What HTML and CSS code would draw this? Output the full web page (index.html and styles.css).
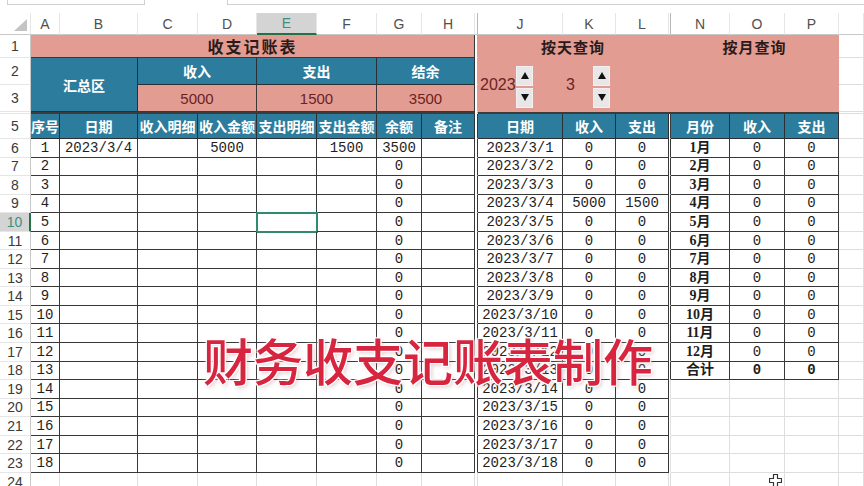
FILE: index.html
```html
<!DOCTYPE html>
<html lang="zh-CN">
<head>
<meta charset="utf-8">
<title>财务收支记账表</title>
<link rel="stylesheet" href="styles.css">
</head>
<body>
<div class="topbar"><div class="namebox"></div><div class="fx"></div><div class="formula"></div></div>
<div class="sheet">
<div class="ch corner"><svg width="13" height="12" viewBox="0 0 13 12"><path d="M13 0 L13 12 L0 12 Z" fill="#c4c4c4"/></svg></div><div class="ch">A</div><div class="ch">B</div><div class="ch">C</div><div class="ch">D</div><div class="ch on">E</div><div class="ch">F</div><div class="ch">G</div><div class="ch">H</div><div class="ch ci"></div><div class="ch">J</div><div class="ch">K</div><div class="ch">L</div><div class="ch ci"></div><div class="ch">N</div><div class="ch">O</div><div class="ch">P</div><div class="ch"></div>

<div class="rh">1</div><div class="p d title s8">收支记账表</div><div class="ig top"></div><div class="pk qh s3">按天查询</div><div class="pk"></div><div class="pk qh s3">按月查询</div><div></div>

<div class="rh">2</div><div class="t s2 r2">汇总区</div><div class="t s2">收入</div><div class="t s2">支出</div><div class="t s2">结余</div><div class="ig top"></div><div class="pk s3 r2 qd"><span class="yr">2023</span><span class="spin"><span class="sb"><svg width="8" height="7" viewBox="0 0 8 7"><path d="M4 0 L8 7 L0 7 Z"/></svg></span><span class="sb"><svg width="8" height="7" viewBox="0 0 8 7"><path d="M0 0 L8 0 L4 7 Z"/></svg></span></span><span class="mn">3</span><span class="spin"><span class="sb"><svg width="8" height="7" viewBox="0 0 8 7"><path d="M4 0 L8 7 L0 7 Z"/></svg></span><span class="sb"><svg width="8" height="7" viewBox="0 0 8 7"><path d="M0 0 L8 0 L4 7 Z"/></svg></span></span></div><div class="pk r2"></div><div class="pk s3 r2"></div><div></div>

<div class="rh">3</div><div class="p d s2 num">5000</div><div class="p d s2 num">1500</div><div class="p d s2 num">3500</div><div class="ig top"></div><div></div>

<div class="rh"></div><div class="gap s8"></div><div class="ig top"></div><div class="gap s3"></div><div class="gap"></div><div class="gap s3"></div><div></div>

<div class="rh">5</div><div class="t">序号</div><div class="t">日期</div><div class="t">收入明细</div><div class="t">收入金额</div><div class="t">支出明细</div><div class="t">支出金额</div><div class="t">余额</div><div class="t">备注</div><div class="ig"></div><div class="t">日期</div><div class="t">收入</div><div class="t">支出</div><div class="ig"></div><div class="t">月份</div><div class="t">收入</div><div class="t">支出</div><div></div>

<div class="rh">6</div><div class="d">1</div><div class="d">2023/3/4</div><div class="d"></div><div class="d">5000</div><div class="d"></div><div class="d">1500</div><div class="d">3500</div><div class="d"></div><div class="ig"></div><div class="d">2023/3/1</div><div class="d">0</div><div class="d">0</div><div class="ig"></div><div class="d mo">1月</div><div class="d">0</div><div class="d">0</div><div></div>
<div class="rh">7</div><div class="d">2</div><div class="d"></div><div class="d"></div><div class="d"></div><div class="d"></div><div class="d"></div><div class="d">0</div><div class="d"></div><div class="ig"></div><div class="d">2023/3/2</div><div class="d">0</div><div class="d">0</div><div class="ig"></div><div class="d mo">2月</div><div class="d">0</div><div class="d">0</div><div></div>
<div class="rh">8</div><div class="d">3</div><div class="d"></div><div class="d"></div><div class="d"></div><div class="d"></div><div class="d"></div><div class="d">0</div><div class="d"></div><div class="ig"></div><div class="d">2023/3/3</div><div class="d">0</div><div class="d">0</div><div class="ig"></div><div class="d mo">3月</div><div class="d">0</div><div class="d">0</div><div></div>
<div class="rh">9</div><div class="d">4</div><div class="d"></div><div class="d"></div><div class="d"></div><div class="d"></div><div class="d"></div><div class="d">0</div><div class="d"></div><div class="ig"></div><div class="d">2023/3/4</div><div class="d">5000</div><div class="d">1500</div><div class="ig"></div><div class="d mo">4月</div><div class="d">0</div><div class="d">0</div><div></div>
<div class="rh on">10</div><div class="d">5</div><div class="d"></div><div class="d"></div><div class="d"></div><div class="d sel"></div><div class="d"></div><div class="d">0</div><div class="d"></div><div class="ig"></div><div class="d">2023/3/5</div><div class="d">0</div><div class="d">0</div><div class="ig"></div><div class="d mo">5月</div><div class="d">0</div><div class="d">0</div><div></div>
<div class="rh">11</div><div class="d">6</div><div class="d"></div><div class="d"></div><div class="d"></div><div class="d"></div><div class="d"></div><div class="d">0</div><div class="d"></div><div class="ig"></div><div class="d">2023/3/6</div><div class="d">0</div><div class="d">0</div><div class="ig"></div><div class="d mo">6月</div><div class="d">0</div><div class="d">0</div><div></div>
<div class="rh">12</div><div class="d">7</div><div class="d"></div><div class="d"></div><div class="d"></div><div class="d"></div><div class="d"></div><div class="d">0</div><div class="d"></div><div class="ig"></div><div class="d">2023/3/7</div><div class="d">0</div><div class="d">0</div><div class="ig"></div><div class="d mo">7月</div><div class="d">0</div><div class="d">0</div><div></div>
<div class="rh">13</div><div class="d">8</div><div class="d"></div><div class="d"></div><div class="d"></div><div class="d"></div><div class="d"></div><div class="d">0</div><div class="d"></div><div class="ig"></div><div class="d">2023/3/8</div><div class="d">0</div><div class="d">0</div><div class="ig"></div><div class="d mo">8月</div><div class="d">0</div><div class="d">0</div><div></div>
<div class="rh">14</div><div class="d">9</div><div class="d"></div><div class="d"></div><div class="d"></div><div class="d"></div><div class="d"></div><div class="d">0</div><div class="d"></div><div class="ig"></div><div class="d">2023/3/9</div><div class="d">0</div><div class="d">0</div><div class="ig"></div><div class="d mo">9月</div><div class="d">0</div><div class="d">0</div><div></div>
<div class="rh">15</div><div class="d">10</div><div class="d"></div><div class="d"></div><div class="d"></div><div class="d"></div><div class="d"></div><div class="d">0</div><div class="d"></div><div class="ig"></div><div class="d">2023/3/10</div><div class="d">0</div><div class="d">0</div><div class="ig"></div><div class="d mo">10月</div><div class="d">0</div><div class="d">0</div><div></div>
<div class="rh">16</div><div class="d">11</div><div class="d"></div><div class="d"></div><div class="d"></div><div class="d"></div><div class="d"></div><div class="d">0</div><div class="d"></div><div class="ig"></div><div class="d">2023/3/11</div><div class="d">0</div><div class="d">0</div><div class="ig"></div><div class="d mo">11月</div><div class="d">0</div><div class="d">0</div><div></div>
<div class="rh">17</div><div class="d">12</div><div class="d"></div><div class="d"></div><div class="d"></div><div class="d"></div><div class="d"></div><div class="d">0</div><div class="d"></div><div class="ig"></div><div class="d">2023/3/12</div><div class="d">0</div><div class="d">0</div><div class="ig"></div><div class="d mo">12月</div><div class="d">0</div><div class="d">0</div><div></div>
<div class="rh">18</div><div class="d">13</div><div class="d"></div><div class="d"></div><div class="d"></div><div class="d"></div><div class="d"></div><div class="d">0</div><div class="d"></div><div class="ig"></div><div class="d">2023/3/13</div><div class="d">0</div><div class="d">0</div><div class="ig"></div><div class="d mo b">合计</div><div class="d b">0</div><div class="d b">0</div><div></div>
<div class="rh">19</div><div class="d">14</div><div class="d"></div><div class="d"></div><div class="d"></div><div class="d"></div><div class="d"></div><div class="d">0</div><div class="d"></div><div class="ig"></div><div class="d">2023/3/14</div><div class="d">0</div><div class="d">0</div><div class="il"></div><div></div><div></div><div></div><div></div>
<div class="rh">20</div><div class="d">15</div><div class="d"></div><div class="d"></div><div class="d"></div><div class="d"></div><div class="d"></div><div class="d">0</div><div class="d"></div><div class="ig"></div><div class="d">2023/3/15</div><div class="d">0</div><div class="d">0</div><div class="il"></div><div></div><div></div><div></div><div></div>
<div class="rh">21</div><div class="d">16</div><div class="d"></div><div class="d"></div><div class="d"></div><div class="d"></div><div class="d"></div><div class="d">0</div><div class="d"></div><div class="ig"></div><div class="d">2023/3/16</div><div class="d">0</div><div class="d">0</div><div class="il"></div><div></div><div></div><div></div><div></div>
<div class="rh">22</div><div class="d">17</div><div class="d"></div><div class="d"></div><div class="d"></div><div class="d"></div><div class="d"></div><div class="d">0</div><div class="d"></div><div class="ig"></div><div class="d">2023/3/17</div><div class="d">0</div><div class="d">0</div><div class="il"></div><div></div><div></div><div></div><div></div>
<div class="rh">23</div><div class="d">18</div><div class="d"></div><div class="d"></div><div class="d"></div><div class="d"></div><div class="d"></div><div class="d">0</div><div class="d"></div><div class="ig"></div><div class="d">2023/3/18</div><div class="d">0</div><div class="d">0</div><div class="il"></div><div></div><div></div><div></div><div></div>
<div class="rh">24</div><div></div><div></div><div></div><div></div><div></div><div></div><div></div><div></div><div></div><div></div><div></div><div></div><div></div><div></div><div></div><div></div><div></div>
</div>
<div class="overlay">财务收支记账表制作</div>
<svg class="cursor" width="13" height="13" viewBox="0 0 13 13"><path d="M4.5 0.5 H8.5 V4.5 H12.5 V8.5 H8.5 V12.5 H4.5 V8.5 H0.5 V4.5 H4.5 Z" fill="#fff" stroke="#333" stroke-width="1.2" stroke-linejoin="round"/></svg>
</body>
</html>
```

FILE: styles.css
```css
* { box-sizing: border-box; margin: 0; padding: 0; }
body {
  width: 864px;
  height: 486px;
  overflow: hidden;
  background: #fff;
  position: relative;
  font-family: "Liberation Mono", "Noto Sans CJK SC", monospace;
  color: #1e1e1e;
}
.topbar { height: 13px; display: flex; align-items: flex-start; }
.namebox { margin-left: 7px; width: 138px; height: 5px; border: 1px solid #d0d0d0; border-top: none; }
.fx { width: 82px; height: 5px; }
.formula { flex: 1; height: 5px; border: 1px solid #d0d0d0; border-top: none; border-right: none; }

.sheet {
  display: grid;
  grid-template-columns: 31px 29px 78px 60px 59px 60px 60px 45px 53px 3px 85px 53px 53px 2px 59px 55px 54px 25px;
  grid-template-rows: 22px 23px 27px 27px 2px 25px repeat(18, 18.56px) 20px;
}
.sheet > div {
  border-right: 1px solid #dedede;
  border-bottom: 1px solid #dedede;
  display: flex;
  align-items: center;
  justify-content: center;
  font-size: 14px;
  line-height: 1;
  white-space: nowrap;
  overflow: hidden;
}
.s2 { grid-column: span 2; }
.s3 { grid-column: span 3; }
.s8 { grid-column: span 8; }
.r2 { grid-row: span 2; }

.sheet > .ch {
  font-family: "Liberation Sans", sans-serif;
  font-size: 14px;
  color: #505050;
  border-right-color: #e6e6e6;
  border-bottom-color: #c8c8c8;
}
.sheet > .corner { justify-content: flex-end; align-items: flex-end; padding: 0 3px 3px 0; }
.sheet > .ch.on { background: #d4d4d4; color: #3f8f7d; border-bottom: 2px solid #217346; }
.sheet > .ci { border-right-color: #b8b8b8; }

.sheet > .rh {
  font-family: "Liberation Sans", sans-serif;
  font-size: 14px;
  color: #3a3a3a;
  border-right-color: #c8c8c8;
  border-bottom-color: #e6e6e6;
}
.sheet > .rh.on { background: #d4d4d4; color: #3f8f7d; border-right: 2px solid #217346; }

.sheet > .d { border-color: #383838; }
.sheet > .ig { border-right-color: #383838; border-bottom-color: #fff; }
.sheet > .ig.top { border-right-color: #b0b0b0; }
.sheet > .il { border-right-color: #e0e0e0; border-bottom-color: #fff; }

.sheet > .p { background: #e29c92; }
.sheet > .pk { background: #e29c92; border-color: transparent; }
.sheet > .t {
  background: #2c7d9d;
  color: #fff;
  font-family: "Noto Sans CJK SC", sans-serif;
  font-weight: 700;
  font-size: 14px;
  border-color: #2a3033;
}
.sheet > .gap { background: #3c3c3c; border-color: #3c3c3c; }

.sheet > .title {
  font-family: "Noto Sans CJK SC", sans-serif;
  font-weight: 700;
  font-size: 16px;
  letter-spacing: 2px;
  color: #2a1a1a;
}
.sheet > .qh {
  font-family: "Noto Sans CJK SC", sans-serif;
  font-weight: 700;
  font-size: 15px;
  letter-spacing: 1px;
  color: #2a1a1a;
}
.sheet > .num {
  font-family: "Liberation Sans", sans-serif;
  font-size: 15px;
  color: #6e1f1f;
}
.sheet > .mo { font-family: "Liberation Serif", "Noto Sans CJK SC", serif; font-weight: 700; font-size: 14px; }
.sheet > .b { font-weight: 700; }
.sheet > .sel { outline: 2px solid #2f8a70; outline-offset: -1px; }

.sheet > .qd { justify-content: flex-start; padding-left: 2px; }
.yr, .mn {
  font-family: "Liberation Sans", sans-serif;
  font-size: 16px;
  color: #6b2424;
}
.yr { width: 36px; }
.mn { margin-left: 33px; width: 9px; }
.spin { display: flex; flex-direction: column; gap: 2px; margin-top: 4px; }
.mn + .spin { margin-left: 18px; }
.sb {
  width: 17px;
  height: 20px;
  background: #e8e6e6;
  border: 1px solid #f2f0f0;
  display: flex;
  align-items: center;
  justify-content: center;
}
.sb svg { fill: #111; }

.overlay {
  position: absolute;
  left: 203px;
  top: 334px;
  font-family: "Noto Sans CJK SC", sans-serif;
  font-weight: 500;
  font-size: 50px;
  line-height: 50px;
  color: #d8253f;
  white-space: nowrap;
  text-shadow: 1px 1px 0 #fff, -1px -1px 0 #fff, 1px -1px 0 #fff, -1px 1px 0 #fff, 0 0 4px rgba(255,255,255,0.9), 2px 2px 4px rgba(120,0,20,0.25);
}
.cursor { position: absolute; left: 769px; top: 474px; }
```
